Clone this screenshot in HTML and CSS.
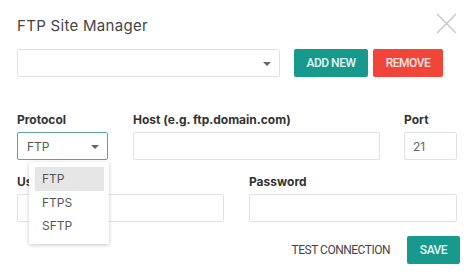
FILE: index.html
```html
<!DOCTYPE html>
<html>
<head>
<meta charset="utf-8">
<link rel="stylesheet" href="styles.css">
</head>
<body>
<div class="modal">
  <div class="header">
    <h1 class="title">FTP Site Manager</h1>
    <svg class="close" width="21" height="21" viewBox="0 0 21 21"><path d="M1 1 L20 20 M20 1 L1 20" stroke="#c4c4c4" stroke-width="1.3" fill="none"/></svg>
  </div>
  <div class="toprow">
    <div class="select site"><span></span><i class="caret"></i></div>
    <button class="btn teal addnew">ADD NEW</button>
    <button class="btn red remove">REMOVE</button>
  </div>
  <div class="row r1">
    <div class="field protocol">
      <label>Protocol</label>
      <div class="select proto"><span>FTP</span><i class="caret"></i></div>
      <ul class="menu">
        <li class="active">FTP</li>
        <li>FTPS</li>
        <li>SFTP</li>
      </ul>
    </div>
    <div class="field host">
      <label>Host (e.g. ftp.domain.com)</label>
      <div class="input"></div>
    </div>
    <div class="field port">
      <label>Port</label>
      <div class="input"><span>21</span></div>
    </div>
  </div>
  <div class="row r2">
    <div class="field user">
      <label>Username</label>
      <div class="input"></div>
    </div>
    <div class="field pass">
      <label>Password</label>
      <div class="input"></div>
    </div>
  </div>
  <div class="footer">
    <button class="btn flat">TEST CONNECTION</button>
    <button class="btn teal save">SAVE</button>
  </div>
</div>
</body>
</html>
```
FILE: styles.css
```css
* { box-sizing: border-box; }
html, body { margin: 0; padding: 0; background: #fff; }
body { width: 474px; height: 276px; overflow: hidden; font-family: "Inter", "Noto Sans", sans-serif; color: #333; }
.modal { padding: 13px 17px 0 17px; width: 474px; }
.header { display: flex; justify-content: space-between; align-items: flex-start; height: 36px; }
.title { margin: 3px 0 0 0; font-size: 15px; font-weight: 400; color: #444; letter-spacing: 0.3px; }
.close { margin-right: 0; margin-top: 0; }
.toprow { display: flex; align-items: center; height: 28px; }
.select { position: relative; display: flex; align-items: center; height: 28px; border: 1px solid #e2e2e2; border-radius: 2px; background: #fff; padding: 0 8px; font-size: 12px; color: #555; }
.site { width: 263px; }
.caret { position: absolute; right: 8px; top: 12px; width: 0; height: 0; border-left: 4px solid transparent; border-right: 4px solid transparent; border-top: 4px solid #666; }
.btn { font-family: "Roboto", "Liberation Sans", sans-serif; font-size: 12px; font-weight: 500; letter-spacing: -0.5px; border: 0; border-radius: 2px; height: 28px; padding: 0; cursor: pointer; }
.teal { background: #179a8b; color: #e8f6f4; }
.red { background: #f2453a; color: #fde6e4; }
.addnew { width: 74px; margin-left: 14px; }
.remove { width: 70px; margin-left: 5px; }
.row { display: flex; }
.r1 { margin-top: 36px; gap: 25px; }
.r1 .port { margin-left: -1px; }
.r2 { margin-top: 15px; gap: 25px; }
.field { position: relative; display: flex; flex-direction: column; }
.field label { font-size: 12px; font-weight: 700; color: #333; height: 19px; line-height: 14px; }
.input { height: 28px; border: 1px solid #e2e2e2; border-radius: 2px; background: #fff; display: flex; align-items: center; padding: 0 8px; font-size: 12px; color: #666; }
.protocol { width: 91px; }
.proto { border-color: #5aa79d; padding-left: 9px; }
.host { width: 247px; }
.port { width: 53px; }
.user { width: 207px; }
.pass { width: 208px; }
.menu { position: absolute; left: 12px; top: 49px; width: 80px; margin: 0; padding: 5px 5px 6px 6px; list-style: none; background: #fff; box-shadow: 0 1px 4px rgba(0,0,0,0.22); z-index: 5; }
.menu li { height: 23.5px; line-height: 23.5px; padding-left: 7px; font-size: 12px; color: #555; }
.menu li.active { background: #e6e6e6; }
.footer { display: flex; justify-content: flex-end; align-items: center; margin-top: 14px; margin-right: -3px; }
.flat { background: transparent; color: #444; font-weight: 400; margin-right: 17px; }
.save { width: 53px; }
```
